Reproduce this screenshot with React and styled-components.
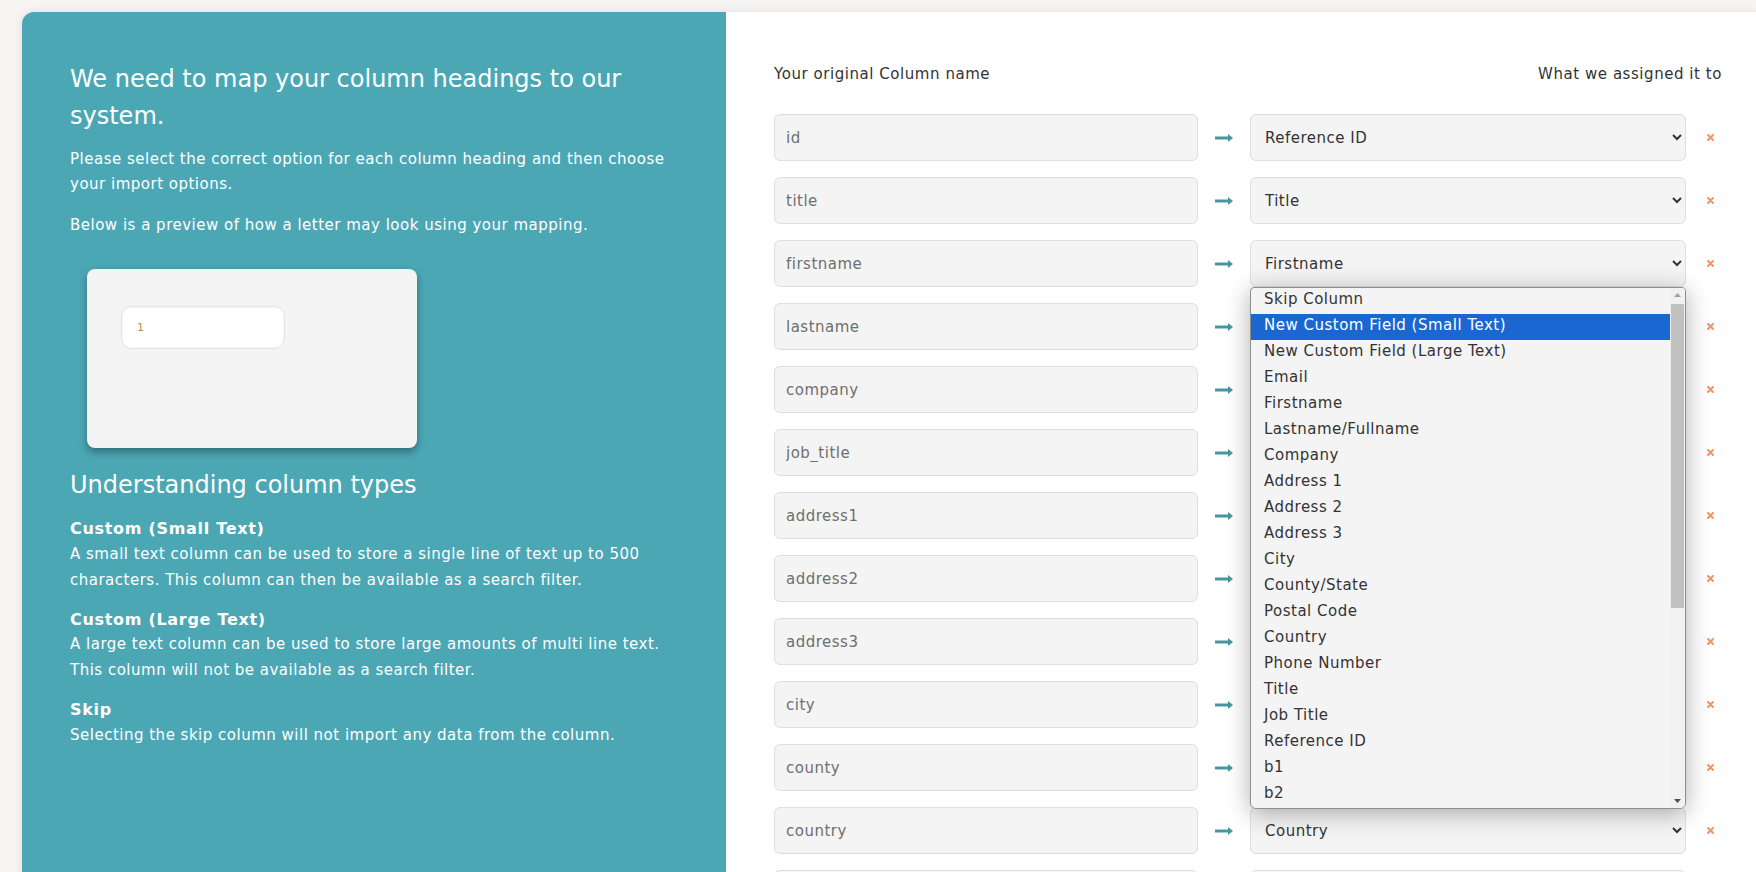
import React from "react";
import styled, { createGlobalStyle } from "styled-components";

const GlobalStyle = createGlobalStyle`
  html, body {
    margin: 0;
    height: 100%;
    overflow: hidden;
    background: #f7f4f4;
    font-family: "DejaVu Sans", sans-serif;
  }
  #root {
    height: 100%;
  }
`;

const rows = [
  { name: "id", value: "Reference ID" },
  { name: "title", value: "Title" },
  { name: "firstname", value: "Firstname", open: true },
  { name: "lastname", value: "Lastname/Fullname" },
  { name: "company", value: "Company" },
  { name: "job_title", value: "Job Title" },
  { name: "address1", value: "Address 1" },
  { name: "address2", value: "Address 2" },
  { name: "address3", value: "Address 3" },
  { name: "city", value: "City" },
  { name: "county", value: "County/State" },
  { name: "country", value: "Country" },
  { name: "postcode", value: "Postal Code" },
  { name: "phone", value: "Phone Number" },
];

const options = [
  "Skip Column",
  "New Custom Field (Small Text)",
  "New Custom Field (Large Text)",
  "Email",
  "Firstname",
  "Lastname/Fullname",
  "Company",
  "Address 1",
  "Address 2",
  "Address 3",
  "City",
  "County/State",
  "Postal Code",
  "Country",
  "Phone Number",
  "Title",
  "Job Title",
  "Reference ID",
  "b1",
  "b2",
];

const ArrowIcon = () => (
  <svg width="18" height="8" viewBox="0 0 18 8">
    <path d="M0 2.5h13V0l5 4-5 4V5.5H0z" fill="#4796a0" />
  </svg>
);

const RemoveIcon = () => (
  <svg width="7" height="7" viewBox="0 0 7 7">
    <path d="M1 1l5 5M6 1L1 6" stroke="#f5905f" strokeWidth="1.9" strokeLinecap="round" />
  </svg>
);

const TriangleIcon = ({ down }) => (
  <svg width="7" height="4" viewBox="0 0 7 4">
    <path d={down ? "M0 0h7L3.5 4z" : "M0 4h7L3.5 0z"} fill={down ? "#505050" : "#a3a3a3"} />
  </svg>
);

const App = () => {
  return (
    <Page>
      <GlobalStyle />
      <Card>
        <InfoPanel>
          <Heading>We need to map your column headings to our system.</Heading>
          <Para>
            Please select the correct option for each column heading and then
            choose your import options.
          </Para>
          <Para>Below is a preview of how a letter may look using your mapping.</Para>
          <Preview>
            <PreviewField>1</PreviewField>
          </Preview>
          <Heading>Understanding column types</Heading>
          <TypeBlock>
            <TypeTitle>Custom (Small Text)</TypeTitle>
            <TypeText>
              A small text column can be used to store a single line of text up
              to 500 characters. This column can then be available as a search
              filter.
            </TypeText>
          </TypeBlock>
          <TypeBlock>
            <TypeTitle>Custom (Large Text)</TypeTitle>
            <TypeText>
              A large text column can be used to store large amounts of multi
              line text. This column will not be available as a search filter.
            </TypeText>
          </TypeBlock>
          <TypeBlock>
            <TypeTitle>Skip</TypeTitle>
            <TypeText>
              Selecting the skip column will not import any data from the column.
            </TypeText>
          </TypeBlock>
        </InfoPanel>

        <MapPanel>
          <ColumnHeads>
            <span>Your original Column name</span>
            <span>What we assigned it to</span>
          </ColumnHeads>
          {rows.map((row) => (
            <Row key={row.name}>
              <SourceInput readOnly value={row.name} />
              <Cell>
                <ArrowIcon />
              </Cell>
              <SelectWrap>
                <TargetSelect defaultValue={row.value}>
                  {options.map((o) => (
                    <option key={o}>{o}</option>
                  ))}
                </TargetSelect>
                {row.open && (
                  <Dropdown>
                    <OptionList>
                      {options.map((o, i) => (
                        <OptionItem key={o} selected={i === 1}>
                          {o}
                        </OptionItem>
                      ))}
                    </OptionList>
                    <ScrollTrack>
                      <ScrollArrow>
                        <TriangleIcon />
                      </ScrollArrow>
                      <ScrollThumb />
                      <ScrollArrow bottom>
                        <TriangleIcon down />
                      </ScrollArrow>
                    </ScrollTrack>
                  </Dropdown>
                )}
              </SelectWrap>
              <RemoveCell>
                <RemoveIcon />
              </RemoveCell>
            </Row>
          ))}
        </MapPanel>
      </Card>
    </Page>
  );
};

const Page = styled.div`
  height: 100%;
  box-sizing: border-box;
  padding: 12px 0 0 22px;
`;

const Card = styled.div`
  display: grid;
  grid-template-columns: 704px 1fr;
  height: 100%;
  border-radius: 12px 0 0 0;
  box-shadow: 0 0 10px rgba(0, 0, 0, 0.1);
`;

const InfoPanel = styled.div`
  background: #4ca7b5;
  color: #fff;
  padding: 49px 48px;
  border-radius: 12px 0 0 0;
`;

const Heading = styled.h3`
  font-size: 24px;
  font-weight: 400;
  line-height: 37px;
  margin: 0 0 12px;
  max-width: 560px;
`;

const Para = styled.p`
  font-size: 15px;
  letter-spacing: 0.5px;
  line-height: 24.75px;
  margin: 0 0 16px;
`;

const Preview = styled.div`
  width: 330px;
  height: 179px;
  box-sizing: border-box;
  margin: 32px 0 19px 17px;
  padding: 37px 0 0 34px;
  background: #f4f4f4;
  border-radius: 8px;
  box-shadow: 0 4px 8px rgba(0, 0, 0, 0.35);
`;

const PreviewField = styled.div`
  width: 164px;
  height: 43px;
  box-sizing: border-box;
  padding-left: 15px;
  display: flex;
  align-items: center;
  background: #fff;
  border: 1px solid #e3e3e3;
  border-radius: 10px;
  box-shadow: inset 0 0 3px rgba(0, 0, 0, 0.08);
  font-size: 11px;
  color: #b98a4e;
`;

const TypeBlock = styled.div`
  margin-bottom: 13px;
`;

const TypeTitle = styled.div`
  font-size: 16px;
  font-weight: 700;
  letter-spacing: 0.7px;
  line-height: 25.8px;
`;

const TypeText = styled.div`
  font-size: 15px;
  letter-spacing: 0.5px;
  line-height: 25.8px;
`;

const MapPanel = styled.div`
  background: #fff;
  padding: 50px 34px 0 48px;
  min-width: 0;
`;

const ColumnHeads = styled.div`
  display: flex;
  justify-content: space-between;
  font-size: 15px;
  letter-spacing: 0.55px;
  line-height: 25px;
  color: #333;
  margin-bottom: 27px;
`;

const Row = styled.div`
  display: grid;
  grid-template-columns: 424fr 52px 436fr 36px;
  height: 47px;
  margin-bottom: 16px;
`;

const fieldStyle = `
  width: 100%;
  height: 47px;
  box-sizing: border-box;
  background: #f4f4f4;
  border: 1px solid #dedede;
  border-radius: 6px;
  font-family: "DejaVu Sans", sans-serif;
  font-size: 15px;
  letter-spacing: 0.5px;
  outline: none;
`;

const SourceInput = styled.input`
  ${fieldStyle}
  padding: 0 11px;
  color: #6f6f6f;
`;

const Cell = styled.div`
  display: flex;
  align-items: center;
  justify-content: center;
`;

const RemoveCell = styled.div`
  display: flex;
  align-items: center;
  justify-content: flex-end;
  padding-right: 8px;
`;

const SelectWrap = styled.div`
  position: relative;
`;

const TargetSelect = styled.select`
  ${fieldStyle}
  padding: 0 6px 0 10px;
  color: #333;
`;

const Dropdown = styled.div`
  position: absolute;
  z-index: 5;
  top: 100%;
  left: 0;
  right: 0;
  height: 520px;
  display: flex;
  background: #f4f4f4;
  border: 1px solid #8f8f8f;
  border-radius: 4px 4px 6px 6px;
  box-shadow: 0 4px 24px rgba(0, 0, 0, 0.32);
  overflow: hidden;
`;

const OptionList = styled.div`
  flex: 1;
  overflow: hidden;
`;

const OptionItem = styled.div`
  height: 26px;
  line-height: 23px;
  padding-left: 13px;
  font-size: 15px;
  letter-spacing: 0.5px;
  white-space: nowrap;
  color: ${(p) => (p.selected ? "#fff" : "#333")};
  background: ${(p) => (p.selected ? "#1a67d2" : "transparent")};
`;

const ScrollTrack = styled.div`
  width: 15px;
  display: flex;
  flex-direction: column;
  align-items: center;
  background: #f1f1f1;
`;

const ScrollArrow = styled.div`
  height: 14px;
  display: flex;
  align-items: center;
  justify-content: center;
  margin-top: ${(p) => (p.bottom ? "auto" : "0")};
`;

const ScrollThumb = styled.div`
  width: 13px;
  height: 304px;
  margin-top: 2px;
  background: #c1c1c1;
`;

export default App;
